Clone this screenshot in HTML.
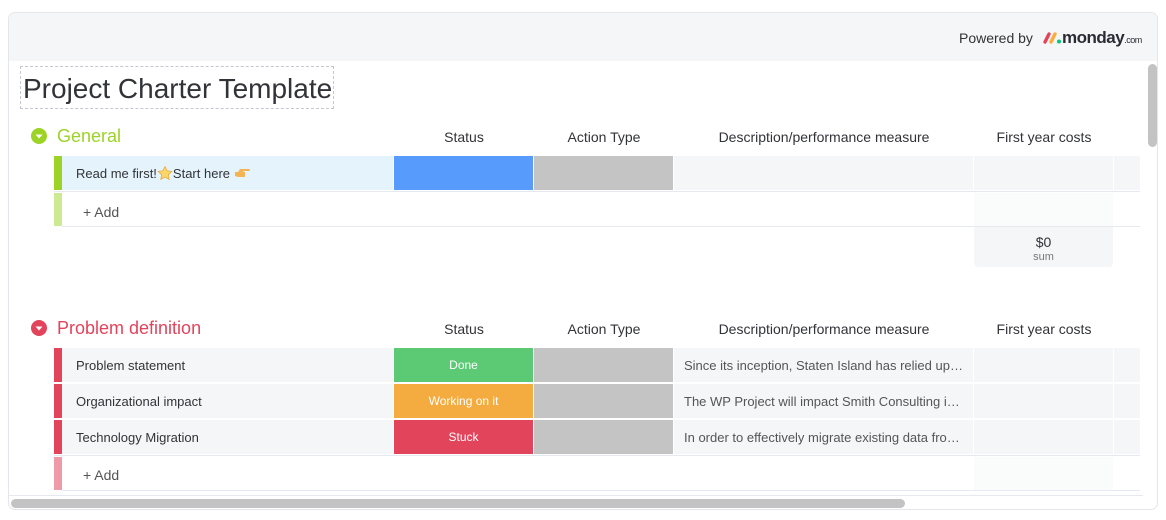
<!DOCTYPE html>
<html><head><meta charset="utf-8"><style>
*{box-sizing:border-box;margin:0;padding:0}
body{width:1166px;height:520px;background:#fff;font-family:"Liberation Sans",Arial,sans-serif;color:#323338;position:relative;overflow:hidden}
.a{position:absolute}
.frame{left:8px;top:12px;width:1150px;height:498px;border:1px solid #e4e6eb;border-radius:7px;overflow:hidden;background:#fff}
.hdr{left:0;top:0;width:1150px;height:48px;background:#f5f6f8}
.t{font-size:13px;white-space:nowrap}
.ch{font-size:14px;text-align:center;color:#323338}
.cell{display:flex;align-items:center;justify-content:center;color:#fff;font-size:12px}
.desc{font-size:13px;color:#555;padding-left:10px;display:flex;align-items:center;white-space:nowrap}
.line{height:1px;background:#e6e9ef}
</style></head><body>
<div class="a frame">
 <div class="a hdr"></div>
 <div class="a t" style="left:950px;top:17px;font-size:14px;color:#333">Powered by</div>
 <svg class="a" style="left:1034px;top:18px" width="20" height="14" viewBox="0 0 20 14">
  <line x1="2" y1="11" x2="6" y2="3" stroke="#e2445c" stroke-width="3.4" stroke-linecap="round"/>
  <line x1="8" y1="11" x2="12" y2="3" stroke="#fdab3d" stroke-width="3.4" stroke-linecap="round"/>
  <circle cx="16" cy="10.5" r="2" fill="#00c875"/>
 </svg>
 <div class="a" style="left:1053px;top:15px;font-size:17px;font-weight:bold;color:#2b2b35;letter-spacing:-0.5px">monday<span style="font-size:9px;font-weight:normal">.com</span></div>
 <div class="a" style="left:1139px;top:51px;width:9px;height:83px;background:#c3c3c3;border-radius:5px"></div>
 <div class="a" style="left:2px;top:486px;width:894px;height:9px;background:#c3c3c3;border-radius:5px"></div>
 <div class="a" style="left:0;top:482px;width:1134px;height:1px;background:#e6e9ef"></div>
</div>

<div class="a" style="left:20px;top:66px;width:314px;height:43px;border:1px dashed #c5c7d0"></div>
<div class="a" style="left:23px;top:73px;font-size:28px;color:#323338">Project Charter Template</div>

<svg class="a" style="left:31px;top:128px" width="16" height="16"><circle cx="8" cy="8" r="8" fill="#9cd326"/><path d="M4.5 6.5h7L8 10.5z" fill="#fff"/></svg>
<div class="a" style="left:57px;top:126px;font-size:18px;color:#9cd326">General</div>
<div class="a ch" style="left:394px;top:129px;width:140px">Status</div>
<div class="a ch" style="left:534px;top:129px;width:140px">Action Type</div>
<div class="a ch" style="left:674px;top:129px;width:300px">Description/performance measure</div>
<div class="a ch" style="left:974px;top:129px;width:140px">First year costs</div>

<div class="a" style="left:54px;top:156px;width:8px;height:34px;background:#9cd326"></div>
<div class="a" style="left:62px;top:156px;width:331px;height:34px;background:#e5f4fc"></div>
<div class="a t" style="left:76px;top:166px">Read me first!<svg width="16" height="14" viewBox="0 0 16 14" style="vertical-align:-2px"><path d="M8 0.5l2.1 4.3 4.7.6-3.4 3.3.8 4.7L8 11.2l-4.2 2.2.8-4.7L1.2 5.4l4.7-.6z" fill="#fbd76b" stroke="#e8a93c" stroke-width=".8"/></svg>Start here <svg width="17" height="12" viewBox="0 0 17 12" style="vertical-align:-1px"><path d="M1 5h3l2-3h9a1 1 0 010 2H9l1 1h1v5H4L1 9z" fill="#f5b453"/></svg></div>
<div class="a" style="left:394px;top:156px;width:139px;height:34px;background:#579bfc"></div>
<div class="a" style="left:534px;top:156px;width:139px;height:34px;background:#c4c4c4"></div>
<div class="a" style="left:674px;top:156px;width:299px;height:34px;background:#f5f6f8"></div>
<div class="a" style="left:974px;top:156px;width:139px;height:34px;background:#f5f6f8"></div>
<div class="a" style="left:1114px;top:156px;width:26px;height:34px;background:#f5f6f8"></div>
<div class="a line" style="left:54px;top:191px;width:1086px"></div>

<div class="a" style="left:54px;top:193px;width:8px;height:33px;background:#cde992"></div>
<div class="a t" style="left:83px;top:204px;font-size:14px;color:#555">+ Add</div>
<div class="a" style="left:974px;top:193px;width:139px;height:33px;background:#fafbfb"></div>
<div class="a line" style="left:62px;top:226px;width:1078px"></div>

<div class="a" style="left:974px;top:227px;width:139px;height:40px;background:#f5f6f8;border-radius:0 0 4px 4px"></div>
<div class="a" style="left:974px;top:234px;width:139px;text-align:center;font-size:14px">$0</div>
<div class="a" style="left:974px;top:251px;width:139px;text-align:center;font-size:11px;color:#777">sum</div>

<svg class="a" style="left:31px;top:320px" width="16" height="16"><circle cx="8" cy="8" r="8" fill="#e2445c"/><path d="M4.5 6.5h7L8 10.5z" fill="#fff"/></svg>
<div class="a" style="left:57px;top:318px;font-size:18px;color:#e2445c">Problem definition</div>
<div class="a ch" style="left:394px;top:321px;width:140px">Status</div>
<div class="a ch" style="left:534px;top:321px;width:140px">Action Type</div>
<div class="a ch" style="left:674px;top:321px;width:300px">Description/performance measure</div>
<div class="a ch" style="left:974px;top:321px;width:140px">First year costs</div>

<div class="a" style="left:54px;top:348px;width:8px;height:34px;background:#e2445c"></div>
<div class="a" style="left:62px;top:348px;width:331px;height:34px;background:#f5f6f8"></div>
<div class="a t" style="left:76px;top:358px">Problem statement</div>
<div class="a cell" style="left:394px;top:348px;width:139px;height:34px;background:#5cca75">Done</div>
<div class="a" style="left:534px;top:348px;width:139px;height:34px;background:#c4c4c4"></div>
<div class="a desc" style="left:674px;top:348px;width:299px;height:34px;background:#f5f6f8">Since its inception, Staten Island has relied up…</div>
<div class="a" style="left:974px;top:348px;width:139px;height:34px;background:#f5f6f8"></div>
<div class="a" style="left:1114px;top:348px;width:26px;height:34px;background:#f5f6f8"></div>

<div class="a" style="left:54px;top:384px;width:8px;height:34px;background:#e2445c"></div>
<div class="a" style="left:62px;top:384px;width:331px;height:34px;background:#f5f6f8"></div>
<div class="a t" style="left:76px;top:394px">Organizational impact</div>
<div class="a cell" style="left:394px;top:384px;width:139px;height:34px;background:#f4ab40">Working on it</div>
<div class="a" style="left:534px;top:384px;width:139px;height:34px;background:#c4c4c4"></div>
<div class="a desc" style="left:674px;top:384px;width:299px;height:34px;background:#f5f6f8">The WP Project will impact Smith Consulting i…</div>
<div class="a" style="left:974px;top:384px;width:139px;height:34px;background:#f5f6f8"></div>
<div class="a" style="left:1114px;top:384px;width:26px;height:34px;background:#f5f6f8"></div>

<div class="a" style="left:54px;top:420px;width:8px;height:34px;background:#e2445c"></div>
<div class="a" style="left:62px;top:420px;width:331px;height:34px;background:#f5f6f8"></div>
<div class="a t" style="left:76px;top:430px">Technology Migration</div>
<div class="a cell" style="left:394px;top:420px;width:139px;height:34px;background:#e2445c">Stuck</div>
<div class="a" style="left:534px;top:420px;width:139px;height:34px;background:#c4c4c4"></div>
<div class="a desc" style="left:674px;top:420px;width:299px;height:34px;background:#f5f6f8">In order to effectively migrate existing data fro…</div>
<div class="a" style="left:974px;top:420px;width:139px;height:34px;background:#f5f6f8"></div>
<div class="a" style="left:1114px;top:420px;width:26px;height:34px;background:#f5f6f8"></div>
<div class="a line" style="left:54px;top:455px;width:1086px"></div>

<div class="a" style="left:54px;top:457px;width:8px;height:33px;background:#ee9aa8"></div>
<div class="a t" style="left:83px;top:467px;font-size:14px;color:#555">+ Add</div>
<div class="a" style="left:974px;top:457px;width:139px;height:33px;background:#fafbfb"></div>
<div class="a line" style="left:62px;top:490px;width:1078px"></div>
</body></html>
